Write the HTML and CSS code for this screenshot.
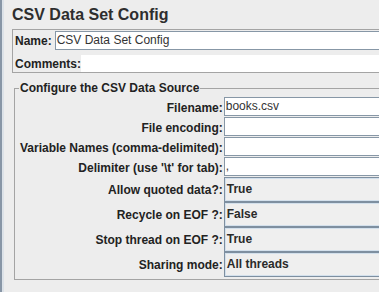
FILE: index.html
```html
<!DOCTYPE html>
<html lang="en">
<head>
    <meta charset="UTF-8">
    <meta name="viewport" content="width=device-width, initial-scale=1.0">
    <title>CSV Data Set Config</title>
    <link rel="stylesheet" href="styles.css">
</head>
<body>
    <div class="page">
        <!-- split pane divider on the left -->
        <div class="divider"></div>

        <div class="editor">
            <h1 class="title">CSV Data Set Config</h1>

            <!-- Name / comments -->
            <div class="name-panel">
                <div class="name-row">
                    <span class="label">Name:</span>
                    <div class="text-field">CSV Data Set Config</div>
                </div>
                <div class="comments-row">
                    <span class="label">Comments:</span>
                    <div class="comments-area"></div>
                </div>
            </div>

            <!-- Data source settings -->
            <fieldset class="source">
                <legend>Configure the CSV Data Source</legend>
                <div class="form-grid">
                    <span class="label">Filename:</span>
                    <div class="text-field">books.csv</div>

                    <span class="label">File encoding:</span>
                    <div class="text-field"></div>

                    <span class="label">Variable Names (comma-delimited):</span>
                    <div class="text-field"></div>

                    <span class="label">Delimiter (use '\t' for tab):</span>
                    <div class="text-field">,</div>

                    <span class="label combo-label">Allow quoted data?:</span>
                    <div class="combo">True</div>

                    <span class="label combo-label">Recycle on EOF ?:</span>
                    <div class="combo">False</div>

                    <span class="label combo-label">Stop thread on EOF ?:</span>
                    <div class="combo">True</div>

                    <span class="label combo-label">Sharing mode:</span>
                    <div class="combo">All threads</div>
                </div>
            </fieldset>
        </div>
    </div>
</body>
</html>
```

FILE: styles.css
```css
* {
    margin: 0;
    padding: 0;
    box-sizing: border-box;
}

html, body {
    overflow: hidden;
}

body {
    font-family: 'Liberation Sans', Arial, sans-serif;
    font-size: 12px;
    color: #222;
    background: #ededed;
    width: 379px;
    height: 292px;
}

.page {
    display: flex;
    width: 379px;
    height: 292px;
}

.divider {
    flex: none;
    width: 4px;
    border-left: 2px solid #8896a6;
    background: #dce2e8;
}

.editor {
    flex: 1;
    min-width: 0;
    padding-left: 8px;
}

.title {
    font-size: 16px;
    font-weight: bold;
    line-height: 18px;
    color: #2e2e2e;
    margin-top: 6px;
    margin-bottom: 5px;
}

.label {
    font-weight: bold;
    line-height: 14px;
    white-space: nowrap;
}

/* Name panel (cut off by the window on the right) */
.name-panel {
    border: 1px solid #a4a4a4;
    border-right: none;
    padding: 1px 0 0 2px;
}

.name-row {
    display: flex;
    align-items: center;
    height: 19px;
}

.name-row .label {
    margin-right: 3px;
}

.name-row .text-field {
    flex: 1;
    margin-bottom: 0;
}

.comments-row {
    display: flex;
    align-items: center;
    height: 17px;
    margin-top: 5px;
}

.comments-area {
    flex: 1;
    align-self: stretch;
    background: #fff;
}

/* Text fields and combos */
.text-field {
    height: 19px;
    margin-bottom: 1px;
    border: 1px solid #8797a6;
    border-right: none;
    background: #fff;
    padding-left: 1px;
    line-height: 17px;
    color: #333;
    white-space: nowrap;
    overflow: hidden;
}

.combo {
    height: 25px;
    border: 1px solid #7e8fa0;
    border-right: none;
    box-shadow: inset 1px 1px 0 #d3e0ec, inset 0 -1px 0 #d3e0ec;
    background: #efefef;
    padding-left: 2px;
    line-height: 23px;
    font-weight: bold;
    color: #2a2a2a;
}

/* Data source fieldset */
.source {
    margin: 8px 0 0 2px;
    border: 1px solid #a4a4a4;
    border-right: none;
    padding: 2px 0 2px 5px;
    min-width: 0;
}

.source legend {
    font-weight: bold;
    line-height: 14px;
    padding: 0 1px;
    margin-left: -1px;
}

.form-grid {
    display: grid;
    grid-template-columns: auto 1fr;
    column-gap: 1px;
}

.form-grid .label {
    justify-self: end;
    align-self: center;
    padding-top: 1px;
}

.form-grid .combo-label {
    padding-top: 0;
}
```
